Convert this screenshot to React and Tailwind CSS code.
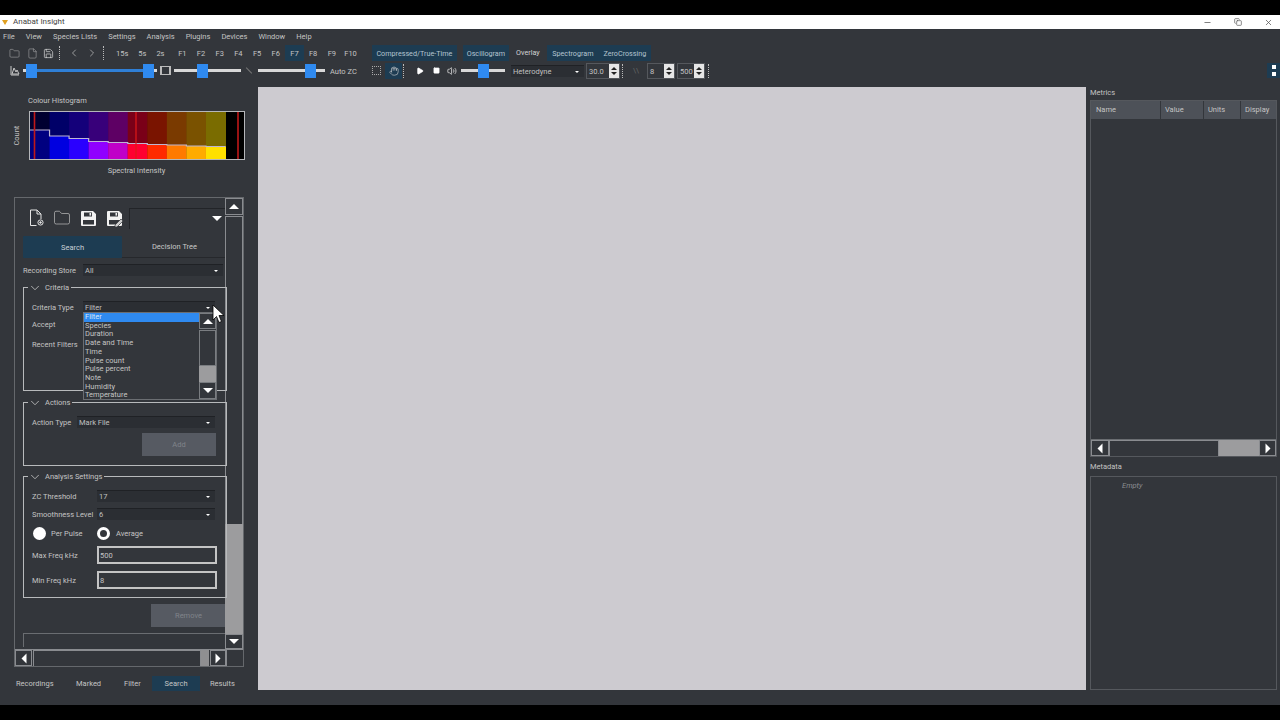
import { Play, Square, Volume2, ChevronLeft, ChevronRight, Folder, File, Save, Hand, Minus, X, Copy, ChevronDown } from "lucide-react";

const menus = ["File", "View", "Species Lists", "Settings", "Analysis", "Plugins", "Devices", "Window", "Help"];
const spans = ["15s", "5s", "2s"];
const keys = ["F1", "F2", "F3", "F4", "F5", "F6", "F7", "F8", "F9", "F10"];
const criteria = ["Filter", "Species", "Duration", "Date and Time", "Time", "Pulse count", "Pulse percent", "Note", "Humidity", "Temperature"];
const bright = ["#000080", "#0000e0", "#2a00ff", "#9000ff", "#c000c8", "#ff0030", "#ff2a00", "#ff7a00", "#ffab00", "#ffe000"];
const dim = ["#000030", "#000068", "#14007a", "#38007a", "#5e0064", "#7a0018", "#7a1400", "#7a3a00", "#7a5200", "#7a6c00"];
const steps = [18, 24, 26.5, 29.5, 30.5, 31.5, 32.5, 33, 34, 34.5];

function Arrow({ dir = "down", className = "" }) {
  const rot = { up: "rotate-180", down: "", left: "rotate-90", right: "-rotate-90" };
  return <span className={`w-0 h-0 border-l-[5px] border-r-[5px] border-t-[5px] border-l-transparent border-r-transparent border-t-white ${rot[dir]} ${className}`} />;
}

function Slider({ className, knobs, fill }) {
  return (
    <div className={`relative h-[3px] bg-[#d8d8d8] ${className}`}>
      {fill && <div className="absolute left-[6px] right-[6px] top-0 h-[3px] bg-[#2f7fd6]" />}
      {knobs.map((k) => (
        <span key={k} className="absolute top-[-5px] w-[11px] h-[14px] bg-[#2f8af0]" style={{ left: k }} />
      ))}
    </div>
  );
}

function Spin({ value, className }) {
  return (
    <div className={`flex h-[16px] border border-[#55585d] items-stretch ${className}`}>
      <span className="flex-1 pl-[2px] text-[7.5px] leading-[15px] text-[#c4c4c4]">{value}</span>
      <span className="w-[10px] bg-[#e6e6e6] flex flex-col items-center justify-center gap-[2px]">
        <span className="w-0 h-0 border-l-[3px] border-r-[3px] border-b-[3px] border-l-transparent border-r-transparent border-b-[#222]" />
        <span className="w-0 h-0 border-l-[3px] border-r-[3px] border-t-[3px] border-l-transparent border-r-transparent border-t-[#222]" />
      </span>
    </div>
  );
}

function Combo({ value, className = "" }) {
  return (
    <div className={`h-[12px] flex items-center justify-between pl-[2px] pr-[5px] bg-[#2b2e33] border-t border-[#1f2125] text-[7.5px] text-[#c0c0c0] ${className}`}>
      <span>{value}</span>
      <span className="w-0 h-0 border-l-[2.5px] border-r-[2.5px] border-t-[2.5px] border-l-transparent border-r-transparent border-t-white" />
    </div>
  );
}

function Label({ className, children }) {
  return <span className={`h-[12px] leading-[14px] whitespace-nowrap ${className}`}>{children}</span>;
}

function Group({ title, className, children }) {
  return (
    <div className={`relative border border-[#b8babc] ${className}`}>
      <div className="absolute top-[-7px] left-[4px] flex items-center gap-[3px] bg-[#33363b] pr-[2px]">
        <ChevronDown size={14} strokeWidth={1.4} className="text-[#c8c8c8]" />
        <span className="text-[7.5px] leading-[12px] text-[#c4c4c4] whitespace-nowrap">{title}</span>
      </div>
      {children}
    </div>
  );
}

function Histogram() {
  const w = 19.55;
  let line = "";
  steps.forEach((s, i) => {
    line += `${i === 0 ? "M" : "L"}${i * w} ${s} L${(i + 1) * w} ${s} `;
  });
  return (
    <svg width="216" height="49" className="block border border-[#b5b7ba] box-border">
      <rect width="216" height="49" fill="#000" />
      {bright.map((c, i) => (
        <g key={c}>
          <rect x={i * w} y="0" width={w + 0.5} height="49" fill={dim[i]} />
          <rect x={i * w} y={steps[i]} width={w + 0.5} height={49 - steps[i]} fill={c} />
        </g>
      ))}
      <path d={line} fill="none" stroke="#bdb6d2" strokeWidth="1.2" />
      <line x1="4.5" x2="4.5" y1="0" y2="49" stroke="#c01818" strokeWidth="1.6" />
      <line x1="106" x2="106" y1="0" y2="49" stroke="#e01818" strokeWidth="1.2" />
      <line x1="208" x2="208" y1="0" y2="49" stroke="#c01818" strokeWidth="1.6" />
    </svg>
  );
}

function NewFileIcon() {
  return (
    <svg width="16" height="18" viewBox="0 0 16 18" fill="none" stroke="#e4e4e4" strokeWidth="1">
      <path d="M7.5 16.5 H1.5 V1 H8 L12 5 V10 M8 1 V5 H12" />
      <circle cx="11.5" cy="13.5" r="2.6" />
      <circle cx="11.5" cy="13.5" r="0.8" fill="#e4e4e4" />
    </svg>
  );
}

function FloppyIcon({ edit }) {
  return (
    <svg width="17" height="17" viewBox="0 0 17 17">
      <path d="M2 1 H13 L16 4 V15 a1 1 0 0 1 -1 1 H2 a1 1 0 0 1 -1 -1 V2 a1 1 0 0 1 1 -1 Z M4 2.5 V6.5 H12 V2.5 Z M3 10 V14.5 H14 V10 Z" fill="#f2f2f2" fillRule="evenodd" />
      <rect x="9.5" y="3" width="1.6" height="2.6" fill="#f2f2f2" />
      {edit && <path d="M9 15 L15 9 L17 11 L11 17 H9 Z" fill="#cfcfcf" stroke="#33363b" strokeWidth="0.7" />}
    </svg>
  );
}

function SearchPanel() {
  return (
    <div className="relative ml-[14px] w-[230px] h-[470px] border border-[#65686c] text-[#c4c4c4] text-[7.5px]">
      {/* vertical scrollbar */}
      <div className="absolute right-0 top-0 bottom-[17px] w-[18px] flex flex-col bg-[#33363b]">
        <div className="h-[17px] border border-[#8a8c90] flex items-center justify-center"><Arrow dir="up" /></div>
        <div className="h-[308px] border border-[#8a8c90] border-b-0 mt-[1px]" />
        <div className="flex-1 bg-[#9c9c9e]" />
        <div className="h-[15px] border border-[#8a8c90] flex items-center justify-center"><Arrow /></div>
      </div>
      {/* icon row */}
      <div className="flex items-center pl-[14px] pt-[8px] h-[32px]">
        <NewFileIcon />
        <Folder size={18} strokeWidth={1} className="ml-[8px] text-[#b5b5b5]" />
        <span className="ml-[9px]"><FloppyIcon /></span>
        <span className="ml-[9px]"><FloppyIcon edit /></span>
        <div className="ml-[6px] w-[97px] h-[21px] flex items-center justify-end pr-[4px] border-t border-l border-[#222428]">
          <Arrow />
        </div>
      </div>
      <div className="flex ml-[8px] mt-[6px] w-[204px] h-[22px]">
        <div className="w-[99px] pt-[1px] flex items-center justify-center bg-[#1d3c52] text-[#c8d0d6] rounded-[1px]">Search</div>
        <div className="flex-1 pt-[1px] flex items-center justify-center border-b border-[#26282c] text-[#c8c8c8]">Decision Tree</div>
      </div>
      <div className="flex items-center ml-[8px] mt-[5px] h-[14px]">
        <Label className="w-[60px]">Recording Store</Label>
        <Combo value="All" className="w-[140px]" />
      </div>
      <Group title="Criteria" className="ml-[8px] mt-[10px] w-[204px] h-[104px]">
        <div className="flex items-center pl-[8px] pt-[13px]">
          <Label className="w-[51px]">Criteria Type</Label>
          <Combo value="Filter" className="w-[132px]" />
        </div>
        <div className="pl-[8px] mt-[6px] leading-[12px]">Accept</div>
        <div className="pl-[8px] mt-[8px] leading-[12px]">Recent Filters</div>
      </Group>
      <Group title="Actions" className="ml-[8px] mt-[11px] w-[204px] h-[64px]">
        <div className="flex items-center pl-[8px] pt-[13px]">
          <Label className="w-[45px]">Action Type</Label>
          <Combo value="Mark File" className="w-[138px]" />
        </div>
        <div className="ml-[118px] mt-[5px] w-[74px] h-[23px] flex items-center justify-center bg-[#565a62] text-[#80848a]">Add</div>
      </Group>
      <Group title="Analysis Settings" className="ml-[8px] mt-[10px] w-[204px] h-[122px]">
        <div className="flex items-center pl-[8px] pt-[13px]">
          <Label className="w-[65px]">ZC Threshold</Label>
          <Combo value="17" className="w-[118px]" />
        </div>
        <div className="flex items-center pl-[8px] mt-[6px]">
          <Label className="w-[65px]">Smoothness Level</Label>
          <Combo value="6" className="w-[118px]" />
        </div>
        <div className="flex items-center pl-[9px] mt-[6px] h-[14px]">
          <span className="w-[13px] h-[13px] rounded-full bg-white" />
          <Label className="ml-[5px] w-[46px]">Per Pulse</Label>
          <span className="w-[13px] h-[13px] rounded-full border-[3px] border-white bg-[#33363b]" />
          <Label className="ml-[6px]">Average</Label>
        </div>
        <div className="flex items-center pl-[8px] mt-[6px]">
          <Label className="w-[65px]">Max Freq kHz</Label>
          <div className="w-[120px] h-[18px] border-2 border-[#c4c4c4] px-[1px] leading-[15px]">500</div>
        </div>
        <div className="flex items-center pl-[8px] mt-[7px]">
          <Label className="w-[65px]">Min Freq kHz</Label>
          <div className="w-[120px] h-[18px] border-2 border-[#c4c4c4] px-[1px] leading-[15px]">8</div>
        </div>
      </Group>
      <div className="ml-[136px] mt-[6px] w-[75px] h-[23px] flex items-center justify-center bg-[#565a62] text-[#80848a]">Remove</div>
      <div className="ml-[8px] mt-[6px] w-[204px] h-[14px] border-t border-l border-[#6a6d71]" />
      {/* horizontal scrollbar */}
      <div className="absolute left-0 bottom-0 w-full h-[17px] border-t border-[#8a8c90] flex bg-[#33363b]">
        <div className="w-[17px] border border-[#8a8c90] flex items-center justify-center"><Arrow dir="left" /></div>
        <div className="w-[168px] ml-[1px] border border-[#8a8c90] border-b-0" />
        <div className="w-[8px] bg-[#8f8f91]" />
        <div className="w-[16px] ml-[1px] border border-[#8a8c90] flex items-center justify-center"><Arrow dir="right" /></div>
        <div className="flex-1 border-l border-[#8a8c90]" />
      </div>
      {/* open criteria dropdown */}
      <div className="absolute left-[68px] top-[114px] w-[134px] h-[88px] bg-[#33363b] border border-[#6b6e72] flex">
        <div className="flex-1 text-[7.5px] leading-[8.7px] text-[#c4c4c4]">
          {criteria.map((c, i) => (
            <div key={c} className={i === 0 ? "pl-[1px] bg-[#2f8af0] text-[#d8e8f8]" : "pl-[1px]"}>{c}</div>
          ))}
        </div>
        <div className="w-[17px] flex flex-col">
          <div className="h-[16px] border border-[#7a7d81] flex items-center justify-center"><Arrow dir="up" /></div>
          <div className="h-[36px] mt-[1px] border border-[#7a7d81]" />
          <div className="h-[16px] bg-[#9c9c9e]" />
          <div className="flex-1 border border-[#7a7d81] flex items-center justify-center"><Arrow /></div>
        </div>
      </div>
      {/* mouse cursor */}
      <svg width="14" height="20" viewBox="0 0 14 20" className="absolute left-[197px] top-[106px]">
        <path d="M1 1 L1 16 L4.5 12.5 L7 18.5 L9.5 17.5 L7 11.5 L12 11.5 Z" fill="#fff" stroke="#000" strokeWidth="0.8" />
      </svg>
    </div>
  );
}

export default function App() {
  return (
    <div className="w-[1280px] h-[720px] overflow-hidden bg-black flex flex-col font-['Roboto','Liberation_Sans',sans-serif] pt-[15px] pb-[15px]">
      {/* title bar */}
      <div className="h-[14px] bg-white flex items-center text-[8px] text-[#444] shrink-0">
        <span className="ml-[2px] w-0 h-0 border-l-[3px] border-r-[3px] border-t-[5px] border-l-transparent border-r-transparent border-t-[#e0a020]" />
        <span className="ml-[5px]">Anabat Insight</span>
        <div className="ml-auto flex items-center text-[#555]">
          <Minus size={9} />
          <Copy size={8} className="ml-[22px]" />
          <X size={9} className="ml-[22px] mr-[7px]" />
        </div>
      </div>
      <div className="flex-1 bg-[#33363b] flex flex-col min-h-0 text-[#c4c4c4]">
        {/* menu */}
        <div className="h-[15px] flex items-center pl-[3px] gap-[11px] text-[7.5px] pt-[1px] shrink-0">
          {menus.map((m) => <span key={m}>{m}</span>)}
        </div>
        {/* toolbar one */}
        <div className="h-[18px] flex items-center text-[7.5px] shrink-0">
          <Folder size={11} strokeWidth={1} className="ml-[9px]" />
          <File size={11} strokeWidth={1} className="ml-[7px]" />
          <Save size={11} strokeWidth={1.4} className="ml-[5px] text-[#e8e8e8]" />
          <span className="ml-[5px] h-[14px] border-l border-dotted border-[#bbb]" />
          <ChevronLeft size={12} strokeWidth={1.4} className="ml-[8px]" />
          <ChevronRight size={12} strokeWidth={1.4} className="ml-[6px]" />
          <span className="ml-[5px] h-[14px] border-l border-dotted border-[#bbb]" />
          <div className="ml-[12px] pt-[2px] flex gap-[10px] w-[47px]">
            {spans.map((s) => <span key={s}>{s}</span>)}
          </div>
          <div className="ml-[10px] flex items-center">
            {keys.map((k) => (
              <span key={k} className={k === "F7" ? "w-[18.7px] h-[16px] pt-[2px] flex items-center justify-center bg-[#1d3c52]" : "w-[18.7px] h-[16px] pt-[2px] flex items-center justify-center"}>{k}</span>
            ))}
          </div>
          <div className="ml-[12px] flex items-center h-[16px] text-[7.2px] text-[#b4c4d0]">
            <span className="w-[85px] h-full pt-[2px] flex items-center justify-center bg-[#1d3c52]">Compressed/True-Time</span>
            <span className="ml-[6px] w-[46px] h-full pt-[2px] flex items-center justify-center bg-[#1d3c52]">Oscillogram</span>
            <span className="w-[38px] text-center text-[#d4d4d4]">Overlay</span>
            <span className="w-[52px] h-full pt-[2px] flex items-center justify-center bg-[#1d3c52]">Spectrogram</span>
            <span className="w-[52px] h-full pt-[2px] flex items-center justify-center bg-[#1d3c52]">ZeroCrossing</span>
          </div>
        </div>
        {/* toolbar two */}
        <div className="h-[17px] flex items-center text-[7.5px] shrink-0">
          <svg width="10" height="11" viewBox="0 0 10 11" className="ml-[10px]"><path d="M1 10 L1 1 M1 10 L9 10 M2 9 L4 3 L6 7 L7 5 L9 9 Z" fill="none" stroke="#c8c8c8" strokeWidth="1" /></svg>
          <Slider className="ml-[3px] w-[134px]" knobs={[3, 120]} fill />
          <span className="ml-[3px] w-[11px] h-[9px] border-x-2 border-y border-[#bbb]" />
          <Slider className="ml-[3px] w-[67px]" knobs={[23]} />
          <span className="ml-[4px] w-[8px] border-t border-[#777] rotate-45" />
          <Slider className="ml-[5px] w-[67px]" knobs={[47]} />
          <Label className="ml-[5px] w-[26px]">Auto ZC</Label>
          <span className="ml-[16px] w-[9px] h-[9px] border border-dotted border-[#aaa]" />
          <span className="ml-[4px] w-[17px] h-[16px] flex items-center justify-center bg-[#1d3c52]">
            <Hand size={10} strokeWidth={1.4} className="text-[#d8d8d8]" />
          </span>
          <span className="ml-[1px] h-[14px] border-l border-dotted border-[#bbb]" />
          <Play size={8} className="ml-[12px] fill-white text-white" />
          <Square size={7} className="ml-[9px] fill-white text-white" />
          <Volume2 size={10} className="ml-[7px] text-[#d8d8d8]" />
          <Slider className="ml-[4px] w-[44px]" knobs={[17]} />
          <Combo value="Heterodyne" className="ml-[6px] mt-[1px] w-[73px]" />
          <Spin value="30.0" className="ml-[2px] w-[34px]" />
          <span className="ml-[2px] h-[14px] border-l border-dotted border-[#bbb]" />
          <span className="ml-[10px] w-[8px] text-[#666] leading-none">\\</span>
          <Spin value="8" className="ml-[6px] w-[28px]" />
          <Spin value="500" className="ml-[2px] w-[28px]" />
          <span className="ml-[3px] h-[14px] border-l border-dotted border-[#bbb]" />
          <span className="ml-auto w-[13px] h-[15px] bg-[#1d3c52] flex flex-col gap-[3px] pl-[5px] justify-center">
            <span className="w-[4px] h-[4px] bg-white" />
            <span className="w-[4px] h-[4px] bg-white" />
          </span>
        </div>
        {/* body */}
        <div className="flex flex-1 min-h-0 pt-[8px]">
          <div className="w-[258px] shrink-0 flex flex-col">
            <div className="pl-[28px] pt-[8px] text-[7.5px] leading-[12px]">Colour Histogram</div>
            <div className="flex items-center mt-[4px] h-[49px]">
              <span className="w-[29px] pl-[4px] flex justify-center"><span className="-rotate-90 text-[7.5px]">Count</span></span>
              <Histogram />
            </div>
            <div className="ml-[29px] w-[215px] text-center text-[7.5px] mt-[5px] leading-[12px]">Spectral Intensity</div>
            <div className="mt-[20px]"><SearchPanel /></div>
            <div className="flex items-center mt-[9px] h-[15px] ml-[16px] text-[7.5px]">
              <span className="w-[60px]">Recordings</span>
              <span className="w-[48px]">Marked</span>
              <span className="w-[28px]">Filter</span>
              <span className="w-[48px] h-full flex items-center justify-center bg-[#1d3c52]">Search</span>
              <span className="ml-[10px]">Results</span>
            </div>
          </div>
          <div className="w-[828px] h-[603px] shrink-0 bg-[#cdcbd0]" />
          <div className="flex-1 pl-[4px] pr-[3px] text-[7.5px] flex flex-col">
            <div className="pt-[1px] leading-[10px]">Metrics</div>
            <div className="mt-[2px] h-[357px] border border-[#55585d] flex flex-col">
              <div className="h-[18px] flex bg-[#4d5158]">
                <span className="w-[70px] pl-[5px] flex items-center border-r border-[#33363b]">Name</span>
                <span className="w-[43px] pl-[4px] flex items-center border-r border-[#33363b]">Value</span>
                <span className="w-[37px] pl-[4px] flex items-center border-r border-[#33363b]">Units</span>
                <span className="flex-1 pl-[4px] flex items-center">Display</span>
              </div>
              <div className="mt-auto h-[17px] flex border-t border-[#6a6d71]">
                <div className="w-[18px] border border-[#8a8c90] flex items-center justify-center"><Arrow dir="left" /></div>
                <div className="w-[110px] border-t border-x border-[#8a8c90]" />
                <div className="w-[40px] bg-[#9c9c9e]" />
                <div className="flex-1 border border-[#8a8c90] flex items-center justify-center"><Arrow dir="right" /></div>
              </div>
            </div>
            <div className="mt-[5px] leading-[10px]">Metadata</div>
            <div className="mt-[4px] h-[214px] border border-[#55585d] pl-[31px] pt-[3px] italic text-[#8a8d90]">Empty</div>
          </div>
        </div>
      </div>
    </div>
  );
}
